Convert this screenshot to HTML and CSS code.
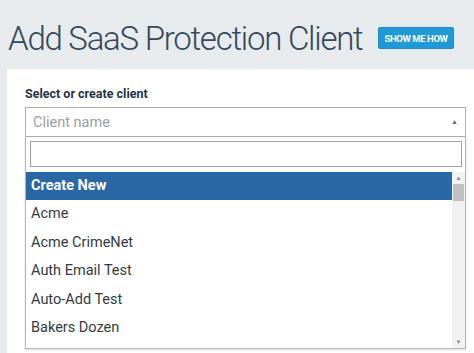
FILE: index.html
```html
<!DOCTYPE html>
<html lang="en">
<head>
  <meta charset="UTF-8">
  <meta name="viewport" content="width=device-width, initial-scale=1.0">
  <title>Add SaaS Protection Client</title>
  <link rel="stylesheet" href="styles.css">
</head>
<body>
  <!-- Page header -->
  <div class="page-header">
    <h1>Add SaaS Protection Client</h1>
    <button class="help-btn">SHOW ME HOW</button>
  </div>

  <!-- Client form -->
  <div class="panel">
    <label class="field-label">Select or create client</label>
    <div class="select">
      <span class="placeholder">Client name</span>
      <span class="caret">&#9650;</span>
    </div>
    <div class="dropdown">
      <div class="search-wrap">
        <input class="search" type="text">
      </div>
      <div class="list-wrap">
        <ul class="options">
          <li class="option active">Create New</li>
          <li class="option">Acme</li>
          <li class="option">Acme CrimeNet</li>
          <li class="option">Auth Email Test</li>
          <li class="option">Auto-Add Test</li>
          <li class="option">Bakers Dozen</li>
        </ul>
        <div class="scrollbar">
          <span class="arrow">&#9650;</span>
          <div class="track"><div class="thumb"></div></div>
          <span class="arrow">&#9660;</span>
        </div>
      </div>
    </div>
  </div>
</body>
</html>
```
FILE: styles.css
```css
body {
  margin: 0;
  padding: 0;
  background-color: #e8ebee;
  font-family: Roboto, "Liberation Sans", sans-serif;
  overflow: hidden;
}
.page-header {
  display: flex;
  align-items: center;
  padding: 14px 0 0 8px;
  height: 48px;
  white-space: nowrap;
}
.page-header h1 {
  margin: 0;
  font-size: 33px;
  font-weight: 300;
  color: #34495a;
  letter-spacing: -1.25px;
}
.help-btn {
  margin-left: 15px;
  background-color: #1e9ad6;
  color: #fff;
  border: 1px solid #1b8dc4;
  border-radius: 2px;
  font-family: Roboto, sans-serif;
  font-size: 9.5px;
  font-weight: 700;
  letter-spacing: -0.4px;
  padding: 0 6px;
  height: 22px;
  white-space: nowrap;
}
.panel {
  margin-left: 7px;
  margin-top: 7px;
  background-color: #fff;
  padding: 17px 8px 0 18px;
  height: 284px;
  box-sizing: border-box;
  overflow: hidden;
}
.field-label {
  display: block;
  font-size: 12.5px;
  font-weight: 700;
  color: #1f3546;
  margin-bottom: 6px;
}
.select {
  display: flex;
  align-items: center;
  justify-content: space-between;
  height: 28px;
  border: 1px solid #a9afb4;
  padding: 0 7px 0 7px;
}
.placeholder {
  font-size: 14.5px;
  color: #9a9fa4;
}
.caret {
  font-size: 7px;
  color: #666;
}
.dropdown {
  border: 1px solid #b3b7bb;
  border-top: none;
  box-shadow: 0 1px 2px rgba(0, 0, 0, 0.15);
}
.search-wrap {
  padding: 4px 3px 5px 4px;
}
.search {
  display: block;
  width: 100%;
  box-sizing: border-box;
  height: 26px;
  border: 1px solid #9ca2a7;
  border-radius: 0;
  outline: none;
}
.list-wrap {
  display: flex;
  height: 176px;
  overflow: hidden;
}
.options {
  flex: 1;
  list-style: none;
  margin: 0;
  padding: 0;
}
.option {
  height: 28.5px;
  line-height: 28.5px;
  padding-left: 5px;
  font-size: 14.5px;
  color: #333b42;
}
.option.active {
  height: 28px;
  line-height: 28px;
  background-color: #2a67a5;
  color: #fff;
  font-weight: 700;
}
.scrollbar {
  width: 13px;
  background-color: #f1f1f1;
  display: flex;
  flex-direction: column;
  align-items: center;
}
.scrollbar .arrow {
  font-size: 6px;
  color: #888;
  height: 12px;
  line-height: 12px;
}
.track {
  flex: 1;
  width: 100%;
}
.thumb {
  margin: 0 auto;
  width: 11px;
  height: 17px;
  background-color: #c1c1c1;
}
```
